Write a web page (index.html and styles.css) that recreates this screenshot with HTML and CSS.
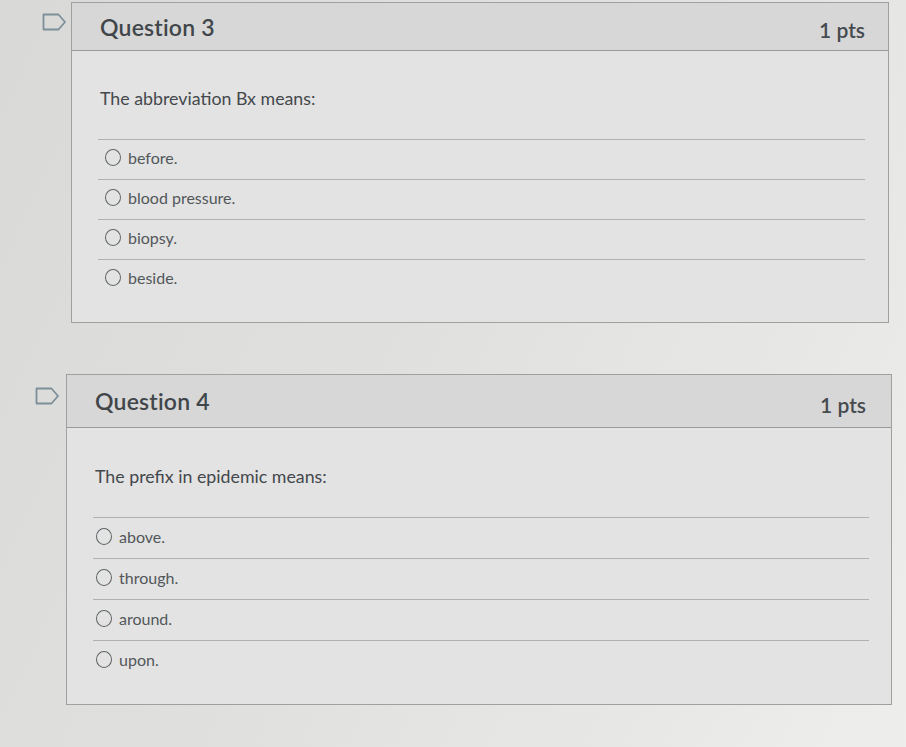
FILE: index.html
```html
<!DOCTYPE html>
<html lang="en">
<head>
<meta charset="utf-8">
<title>Quiz</title>
<link rel="stylesheet" href="styles.css">
</head>
<body>
<main class="quiz">
  <section class="question-row q3">
    <svg class="flag" width="25" height="18" viewBox="0 0 25 18" aria-hidden="true">
      <path d="M1.5 1.5 H16.5 L23 9 L16.5 16.5 H1.5 Z" fill="none" stroke="#7d8f98" stroke-width="1.8" stroke-linejoin="round"/>
    </svg>
    <div class="card">
      <header class="card-header">
        <h2 class="q-title">Question 3</h2>
        <span class="q-pts">1 pts</span>
      </header>
      <div class="card-body">
        <p class="q-text">The abbreviation Bx means:</p>
        <ul class="answers">
          <li class="answer"><span class="radio"></span>before.</li>
          <li class="answer"><span class="radio"></span>blood pressure.</li>
          <li class="answer"><span class="radio"></span>biopsy.</li>
          <li class="answer"><span class="radio"></span>beside.</li>
        </ul>
      </div>
    </div>
  </section>

  <section class="question-row q4">
    <svg class="flag" width="25" height="18" viewBox="0 0 25 18" aria-hidden="true">
      <path d="M1.5 1.5 H16.5 L23 9 L16.5 16.5 H1.5 Z" fill="none" stroke="#7d8f98" stroke-width="1.8" stroke-linejoin="round"/>
    </svg>
    <div class="card">
      <header class="card-header">
        <h2 class="q-title">Question 4</h2>
        <span class="q-pts">1 pts</span>
      </header>
      <div class="card-body">
        <p class="q-text">The prefix in epidemic means:</p>
        <ul class="answers">
          <li class="answer"><span class="radio"></span>above.</li>
          <li class="answer"><span class="radio"></span>through.</li>
          <li class="answer"><span class="radio"></span>around.</li>
          <li class="answer"><span class="radio"></span>upon.</li>
        </ul>
      </div>
    </div>
  </section>
</main>
</body>
</html>
```

FILE: styles.css
```css
html, body {
  margin: 0;
  padding: 0;
}

body {
  width: 906px;
  height: 747px;
  overflow: hidden;
  font-family: Lato, "Open Sans", sans-serif;
  color: #3f4448;
  background: linear-gradient(115deg, #d9d9d8 0%, #e0e0df 45%, #e7e7e6 75%, #eeeeed 100%);
}

.quiz {
  display: flex;
  flex-direction: column;
  padding-top: 2px;
  gap: 51px;
}

.question-row {
  display: flex;
  align-items: flex-start;
}

.q3 {
  padding-left: 42px;
  gap: 4px;
}

.q4 {
  padding-left: 35px;
  gap: 6px;
}

.flag {
  flex: none;
  margin-top: 11px;
}

.q4 .flag {
  margin-top: 13px;
}

.card {
  border: 1px solid #a0a0a0;
  background: #e3e3e3;
  box-sizing: border-box;
}

.q3 .card {
  width: 818px;
  height: 321px;
}

.q4 .card {
  width: 826px;
  height: 331px;
}

.card-header {
  display: flex;
  justify-content: space-between;
  align-items: center;
  background: #d7d7d7;
  border-bottom: 1px solid #9a9a9a;
  box-sizing: border-box;
  padding: 0 23px 0 28px;
  height: 48px;
}

.q4 .card-header {
  height: 53px;
  padding-right: 25px;
}

.q-title {
  margin: 0;
  font-size: 23px;
  font-weight: 600;
  color: #40464a;
  letter-spacing: 0.2px;
  position: relative;
  top: 0;
}

.q-pts {
  font-size: 21px;
  font-weight: 600;
  color: #464b4f;
  position: relative;
  top: 3px;
}

.card-body {
  padding: 0 23px 0 26px;
}

.q4 .card-body {
  padding: 0 22px 0 26px;
}

.q-text {
  margin: 0;
  padding-top: 35px;
  padding-bottom: 28px;
  font-size: 17.8px;
  line-height: 25px;
  color: #43484c;
  padding-left: 2px;
}

.q4 .q-text {
  padding-top: 36px;
  padding-bottom: 28px;
  padding-left: 2px;
}

.answers {
  list-style: none;
  margin: 0;
  padding: 0;
}

.answer {
  display: flex;
  align-items: center;
  gap: 7px;
  height: 40px;
  border-top: 1px solid #b1b1b1;
  font-size: 16px;
  color: #52575a;
  padding-left: 7px;
  box-sizing: border-box;
  padding-bottom: 4px;
}

.q4 .answer {
  height: 41px;
  padding-left: 3px;
}

.radio {
  width: 14px;
  height: 15px;
  border: 1.6px solid #5e6366;
  border-radius: 50%;
  flex: none;
}
```
